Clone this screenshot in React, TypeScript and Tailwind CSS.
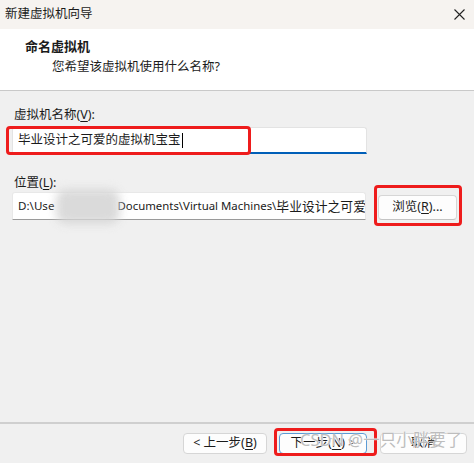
import React from "react";

const font = { fontFamily: '"Noto Sans", "Noto Sans CJK SC", sans-serif' };

function U({ children }: { children: React.ReactNode }) {
  return <span className="underline underline-offset-2">{children}</span>;
}

export default function App() {
  return (
    <div className="relative w-[474px] h-[463px] flex flex-col bg-[#f0f0f0] text-[#1b1b1b] overflow-hidden" style={font}>
      {/* title bar */}
      <div className="h-[29px] bg-[#f6f3f0] flex items-center justify-between pl-[5px] pr-[9px]">
        <span className="text-[12.5px] leading-none">新建虚拟机向导</span>
        <svg width="11" height="11" viewBox="0 0 11 11" className="text-[#222]">
          <path d="M0.5 0.5 L10.5 10.5 M10.5 0.5 L0.5 10.5" stroke="currentColor" strokeWidth="1.1" />
        </svg>
      </div>
      {/* header */}
      <div className="h-[62px] bg-white border-b border-[#c9c9c9] pt-[9px] pl-[25px]">
        <div className="text-[13px] leading-[17px] font-bold">命名虚拟机</div>
        <div className="text-[12.5px] leading-[17px] mt-[3px] pl-[27px]">您希望该虚拟机使用什么名称?</div>
      </div>
      {/* body */}
      <div className="flex-1 px-[12px] pt-[15px]">
        <div className="text-[12.5px] leading-[17px] pl-[2px]">
          虚拟机名称(<U>V</U>):
        </div>
        <div className="mt-[4px] w-[355px] h-[27px] bg-white border border-[#e3e3e3] border-b-2 border-b-[#005fb8] rounded-t-[3px] flex items-center pl-[5px]">
          <span className="text-[12.5px] leading-none">毕业设计之可爱的虚拟机宝宝</span>
          <span className="w-px h-[15px] bg-black ml-[1px]" />
        </div>
        <div className="mt-[20px] text-[12.5px] leading-[17px] pl-[2px]">
          位置(<U>L</U>):
        </div>
        <div className="mt-[1px] flex items-end">
          <div className="w-[354px] h-[28px] bg-white border border-[#e8e8e8] border-b-[#9a9a9a] rounded-t-[3px] flex items-center pl-[5px] overflow-hidden whitespace-nowrap">
            <span className="shrink-0 text-[11.6px] leading-none">D:\Use</span>
            <span className="shrink-0 w-[63px]" />
            <span className="shrink-0 text-[11.4px] leading-none">Documents\Virtual Machines\</span>
            <span className="shrink-0 text-[12.8px] leading-none">毕业设计之可爱</span>
          </div>
          <div className="ml-[12px] w-[79px] h-[25px] bg-[#fdfdfd] border border-[#d6d6d6] border-b-[#c4c4c4] rounded-[4px] flex items-center justify-center text-[12.5px] leading-none">
            浏览(<U>R</U>)...
          </div>
        </div>
      </div>
      {/* footer */}
      <div className="h-[41px] border-t-2 border-[#cfcfcf] flex items-start justify-end pt-[9px] pr-[7px]">
        <div className="w-[84px] h-[21px] bg-[#fdfdfd] border border-[#d6d6d6] rounded-[4px] flex items-center justify-center text-[12.5px] leading-none">
          &lt; 上一步(<U>B</U>)
        </div>
        <div className="ml-[12px] w-[88px] h-[21px] bg-[#fdfdfd] border border-[#5b9bd5] rounded-[4px] flex items-center justify-center text-[12.5px] leading-none">
          下一步(<U>N</U>) &gt;
        </div>
        <div className="ml-[13px] w-[87px] h-[21px] bg-[#fdfdfd] border border-[#d6d6d6] rounded-[4px] flex items-center justify-center text-[12.5px] leading-none">
          取消
        </div>
      </div>

      {/* blur blob over path */}
      <div className="absolute left-[56px] top-[189px] w-[64px] h-[35px] rounded-[10px] bg-[#d6d6d6] blur-[5px] opacity-90" />

      {/* red annotation boxes */}
      <div className="absolute left-[6px] top-[126px] w-[245px] h-[29px] border-[3px] border-[#ee1c1c] rounded-[4px]" />
      <div className="absolute left-[374px] top-[185px] w-[88px] h-[41px] border-[3px] border-[#ee1c1c] rounded-[4px]" />
      <div className="absolute left-[274px] top-[428px] w-[103px] h-[28px] border-[3px] border-[#ee1c1c] rounded-[4px]" />

      {/* watermark */}
      <div
        className="absolute left-[300px] top-[432px] text-[16.5px] leading-none whitespace-nowrap text-[#bdbdbd]"
        style={{ textShadow: "0 0 1px #fff, 0 0 1px #fff" }}
      >
        CSDN @一只小胖要了
      </div>
    </div>
  );
}
